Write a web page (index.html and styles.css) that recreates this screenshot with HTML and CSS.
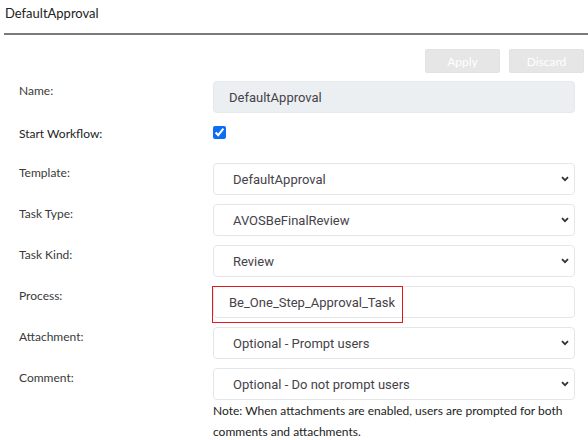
FILE: index.html
```html
<!DOCTYPE html>
<html lang="en">
<head>
<meta charset="utf-8">
<title>DefaultApproval</title>
<link rel="stylesheet" href="styles.css">
</head>
<body>
<div class="panel">
  <header class="panel-header">
    <h1 class="panel-title">DefaultApproval</h1>
  </header>
  <div class="toolbar">
    <button class="btn" type="button" disabled>Apply</button>
    <button class="btn" type="button" disabled>Discard</button>
  </div>
  <form class="form">
    <div class="row">
      <label class="label">Name:</label>
      <div class="field"><input class="input input-readonly" type="text" value="DefaultApproval" readonly></div>
    </div>
    <div class="row row-check">
      <label class="label label-strong">Start Workflow:</label>
      <div class="field"><input class="check" type="checkbox" checked></div>
    </div>
    <div class="row">
      <label class="label">Template:</label>
      <div class="field"><select class="select"><option>DefaultApproval</option></select></div>
    </div>
    <div class="row">
      <label class="label">Task Type:</label>
      <div class="field"><select class="select"><option>AVOSBeFinalReview</option></select></div>
    </div>
    <div class="row">
      <label class="label">Task Kind:</label>
      <div class="field"><select class="select"><option>Review</option></select></div>
    </div>
    <div class="row">
      <label class="label">Process:</label>
      <div class="field field-marked">
        <input class="input" type="text" value="Be_One_Step_Approval_Task">
        <span class="mark"></span>
      </div>
    </div>
    <div class="row">
      <label class="label">Attachment:</label>
      <div class="field"><select class="select"><option>Optional - Prompt users</option></select></div>
    </div>
    <div class="row row-last">
      <label class="label">Comment:</label>
      <div class="field">
        <select class="select"><option>Optional - Do not prompt users</option></select>
        <p class="note">Note: When attachments are enabled, users are prompted for both comments and attachments.</p>
      </div>
    </div>
  </form>
</div>
</body>
</html>
```
FILE: styles.css
```css
html, body {
  margin: 0;
  padding: 0;
  background: #ffffff;
}

body {
  font-family: Lato, "Open Sans", sans-serif;
  color: #333;
}

.panel {
  width: 588px;
}

.panel-header {
  margin: 0 0 0 4px;
  border-bottom: 2px solid #7a7a7a;
  height: 33px;
}

.panel-title {
  margin: 0;
  padding: 5px 0 0 1px;
  font-size: 13px;
  font-weight: 400;
  color: #222;
  line-height: 16px;
}

.toolbar {
  display: flex;
  justify-content: flex-end;
  gap: 9px;
  padding: 14px 4px 0 0;
  height: 24px;
}

.btn {
  width: 75px;
  height: 24px;
  border: 1px solid #e2e2e2;
  border-radius: 2px;
  background: #e6e6e6;
  color: #ffffff;
  font-family: Lato, sans-serif;
  font-size: 12px;
  padding: 0;
}

.form {
  padding: 8px 13px 0 19px;
}

.row {
  display: grid;
  grid-template-columns: 194px 1fr;
  margin-bottom: 9px;
}

.row-check {
  height: 32px;
}

.label {
  font-size: 12px;
  color: #3a3a3a;
  padding-top: 2px;
  line-height: 15px;
}

.label-strong {
  color: #222;
  padding-top: 4px;
}

.field {
  position: relative;
}

.input,
.select {
  box-sizing: border-box;
  width: 100%;
  height: 32px;
  margin: 0;
  border: 1px solid #e3e7ea;
  border-radius: 4px;
  background: #ffffff;
  font-family: Roboto, sans-serif;
  font-size: 13px;
  color: #45424a;
  outline: none;
}

.input {
  padding: 0 15px;
}

.input-readonly {
  background: #eceff1;
  border-color: #e6e9eb;
}

.select {
  -webkit-appearance: none;
  appearance: none;
  padding: 0 30px 0 19px;
  background-image: url("data:image/svg+xml,%3Csvg xmlns='http://www.w3.org/2000/svg' width='8' height='6' viewBox='0 0 8 6'%3E%3Cpath d='M1 1.2l3 3 3-3' fill='none' stroke='%23333' stroke-width='1.8'/%3E%3C/svg%3E");
  background-repeat: no-repeat;
  background-position: right 5px center;
}

.check {
  margin: 4px 0 0 0;
  width: 13px;
  height: 13px;
  accent-color: #0b6ef5;
}

.mark {
  position: absolute;
  left: -1px;
  top: 0;
  width: 191px;
  height: 37px;
  box-sizing: border-box;
  border: 1px solid #e0191f;
  pointer-events: none;
}

.note {
  margin: 0;
  font-size: 12px;
  line-height: 21px;
  color: #222;
}
```
